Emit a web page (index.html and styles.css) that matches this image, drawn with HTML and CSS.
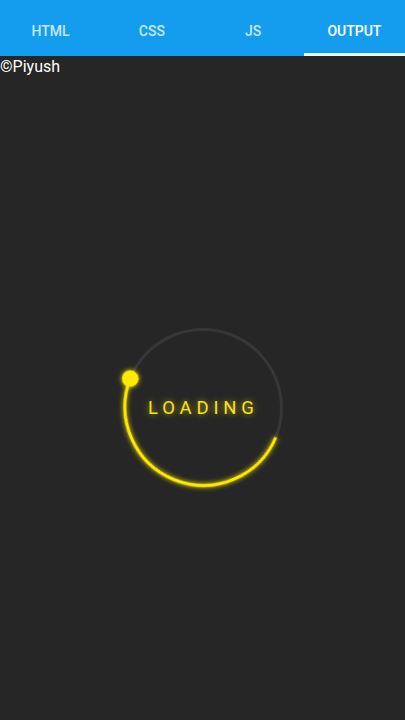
FILE: index.html
```html
<!DOCTYPE html>
<html>
<head>
<meta charset="utf-8">
<link rel="stylesheet" href="styles.css">
</head>
<body>
<nav class="tabs">
  <div class="tab">HTML</div>
  <div class="tab">CSS</div>
  <div class="tab">JS</div>
  <div class="tab active">OUTPUT</div>
</nav>
<main class="output">
  <div class="credit">©Piyush</div>
  <div class="stage">
    <div class="loader">
      <svg class="ring" width="160" height="160" viewBox="0 0 160 160">
        <defs>
          <filter id="glow" x="-30%" y="-30%" width="160%" height="160%">
            <feGaussianBlur stdDeviation="2.5" result="b"/>
            <feMerge><feMergeNode in="b"/><feMergeNode in="SourceGraphic"/></feMerge>
          </filter>
        </defs>
        <circle cx="80" cy="80" r="78.5" fill="none" stroke="#373737" stroke-width="3"/>
        <g transform="rotate(-23 80 80)" filter="url(#glow)">
          <path d="M 135.5 135.5 A 78.5 78.5 0 0 1 24.5 24.5" fill="none" stroke="#ffea00" stroke-width="3"/>
          <circle cx="24.5" cy="24.5" r="8.3" fill="#ffea00"/>
        </g>
      </svg>
      <span class="label">LOADING</span>
    </div>
  </div>
</main>
</body>
</html>
```
FILE: styles.css
```css
html, body {
  margin: 0;
  padding: 0;
  height: 100%;
}
body {
  background: #262626;
  font-family: Roboto, "Liberation Sans", sans-serif;
  display: flex;
  flex-direction: column;
}
.tabs {
  height: 56px;
  background: #149def;
  display: grid;
  grid-template-columns: repeat(4, 1fr);
  box-sizing: border-box;
}
.tab {
  display: flex;
  align-items: center;
  justify-content: center;
  color: #c9e8fc;
  font-size: 14px;
  font-weight: 500;
  padding-bottom: 1px;
  box-sizing: border-box;
  border-bottom: 3px solid transparent;
  padding-top: 10px;
}
.tab.active {
  color: #ffffff;
  border-bottom-color: #e8f6ff;
}
.output {
  flex: 1;
  display: flex;
  flex-direction: column;
}
.credit {
  color: #ffffff;
  font-size: 16px;
  line-height: 20px;
  padding-top: 1px;
}
.stage {
  flex: 1;
  display: flex;
  align-items: center;
  justify-content: center;
  padding-top: 19px;
  padding-left: 1px;
}
.loader {
  position: relative;
  width: 160px;
  height: 160px;
  display: flex;
  align-items: center;
  justify-content: center;
}
.ring {
  position: absolute;
  left: 0;
  top: 0;
  overflow: visible;
}
.label {
  position: relative;
  color: #f7e41c;
  font-size: 18.5px;
  letter-spacing: 4.8px;
  margin-right: -0.8px;
  text-shadow: 0 0 6px rgba(255, 230, 0, 0.7);
}
```
